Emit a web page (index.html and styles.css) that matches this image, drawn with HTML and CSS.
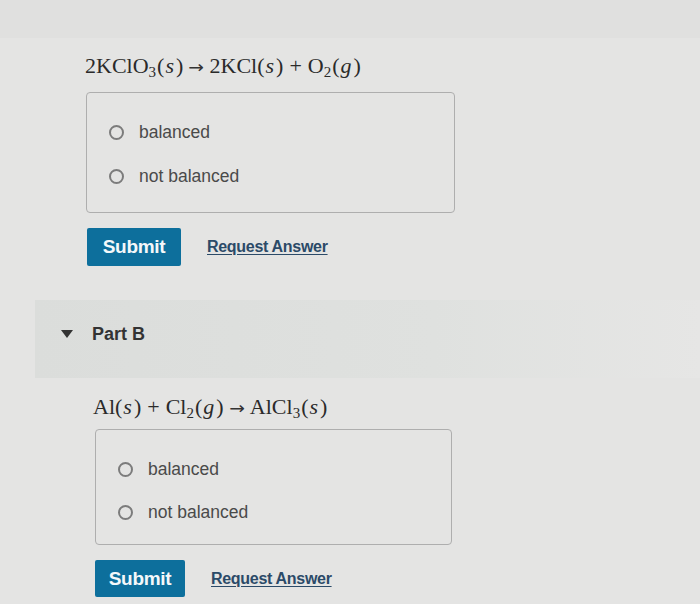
FILE: index.html
```html
<!DOCTYPE html>
<html>
<head>
<meta charset="utf-8">
<link rel="stylesheet" href="styles.css">
</head>
<body>
<div class="topbar"></div>
<section class="part part-a">
  <div class="eq">2KClO<sub>3</sub>(<i>s</i>)<span class="op arrow">→</span>2KCl(<i>s</i>)<span class="op">+</span>O<sub>2</sub>(<i>g</i>)</div>
  <div class="box box-a">
    <label class="opt"><span class="radio"></span><span>balanced</span></label>
    <label class="opt"><span class="radio"></span><span>not balanced</span></label>
  </div>
  <div class="actions">
    <button class="submit">Submit</button>
    <a class="req" href="#">Request Answer</a>
  </div>
</section>
<div class="part-header">
  <span class="tri"></span>
  <span class="ptitle">Part B</span>
</div>
<section class="part part-b">
  <div class="eq">Al(<i>s</i>)<span class="op">+</span>Cl<sub>2</sub>(<i>g</i>)<span class="op arrow">→</span>AlCl<sub>3</sub>(<i>s</i>)</div>
  <div class="box box-b">
    <label class="opt"><span class="radio"></span><span>balanced</span></label>
    <label class="opt"><span class="radio"></span><span>not balanced</span></label>
  </div>
  <div class="actions">
    <button class="submit small">Submit</button>
    <a class="req" href="#">Request Answer</a>
  </div>
</section>
</body>
</html>
```
FILE: styles.css
```css
html, body {
  margin: 0;
  padding: 0;
}
body {
  width: 700px;
  height: 604px;
  overflow: hidden;
  background: #e4e4e3;
  font-family: "Liberation Sans", Arial, sans-serif;
  color: #444;
}
.topbar {
  height: 38px;
  background: #e0e0df;
}
.part-a {
  padding-left: 85px;
  padding-top: 16px;
}
.eq {
  font-family: "Liberation Serif", "Times New Roman", serif;
  font-size: 22px;
  line-height: 24px;
  height: 24px;
  color: #2a2a2a;
  white-space: nowrap;
}
.eq sub {
  font-size: 15px;
  line-height: 0;
  vertical-align: -4px;
  margin-right: 1px;
}
.eq i {
  padding: 0 2px 0 1px;
}
.op {
  display: inline-block;
  margin: 0 6px;
}
.arrow {
  font-family: "DejaVu Sans", sans-serif;
  font-size: 17px;
  color: #333;
  transform: scaleX(1.1);
}
.box {
  border: 1px solid #aeaeae;
  border-radius: 4px;
  box-sizing: border-box;
  display: flex;
  flex-direction: column;
}
.box-a {
  margin-top: 14px;
  margin-left: 1px;
  width: 369px;
  height: 121px;
  padding: 28px 0 0 22px;
  gap: 22px;
}
.opt {
  display: flex;
  align-items: center;
  gap: 15px;
  height: 22px;
  font-size: 17.5px;
  color: #4a4a4a;
}
.radio {
  width: 11px;
  height: 11px;
  border: 2px solid #7c7c7c;
  border-radius: 50%;
  flex: none;
}
.actions {
  display: flex;
  align-items: center;
  margin-top: 15px;
  gap: 26px;
}
.submit {
  width: 94px;
  height: 38px;
  margin-left: 2px;
  border: none;
  border-radius: 2px;
  background: #0d6f9c;
  color: #f4f8fa;
  font-family: "Liberation Sans", Arial, sans-serif;
  font-size: 19px;
  font-weight: bold;
  letter-spacing: -0.3px;
  padding: 0;
}
.submit.small {
  width: 90px;
  height: 37px;
}
.req {
  color: #2b4a68;
  font-size: 16px;
  font-weight: bold;
  letter-spacing: -0.3px;
  text-decoration: underline;
  text-underline-offset: 2px;
  text-decoration-thickness: 1px;
}
.part-header {
  margin-top: 34px;
  margin-left: 35px;
  height: 78px;
  background: linear-gradient(90deg, #dbdddb 0%, #dfe1df 60%, #e6e6e5 100%);
  display: flex;
  align-items: center;
  box-sizing: border-box;
  padding-left: 26px;
  padding-bottom: 10px;
}
.tri {
  width: 0;
  height: 0;
  border-left: 6px solid transparent;
  border-right: 6px solid transparent;
  border-top: 8px solid #333;
  margin-right: 19px;
}
.ptitle {
  font-size: 18px;
  font-weight: bold;
  color: #333;
  letter-spacing: 0;
}
.part-b {
  padding-left: 93px;
  padding-top: 17px;
}
.box-b {
  margin-top: 10px;
  margin-left: 2px;
  width: 357px;
  height: 116px;
  padding: 28px 0 0 22px;
  gap: 21px;
}
.part-b .actions {
  margin-top: 15px;
  gap: 26px;
}
```
